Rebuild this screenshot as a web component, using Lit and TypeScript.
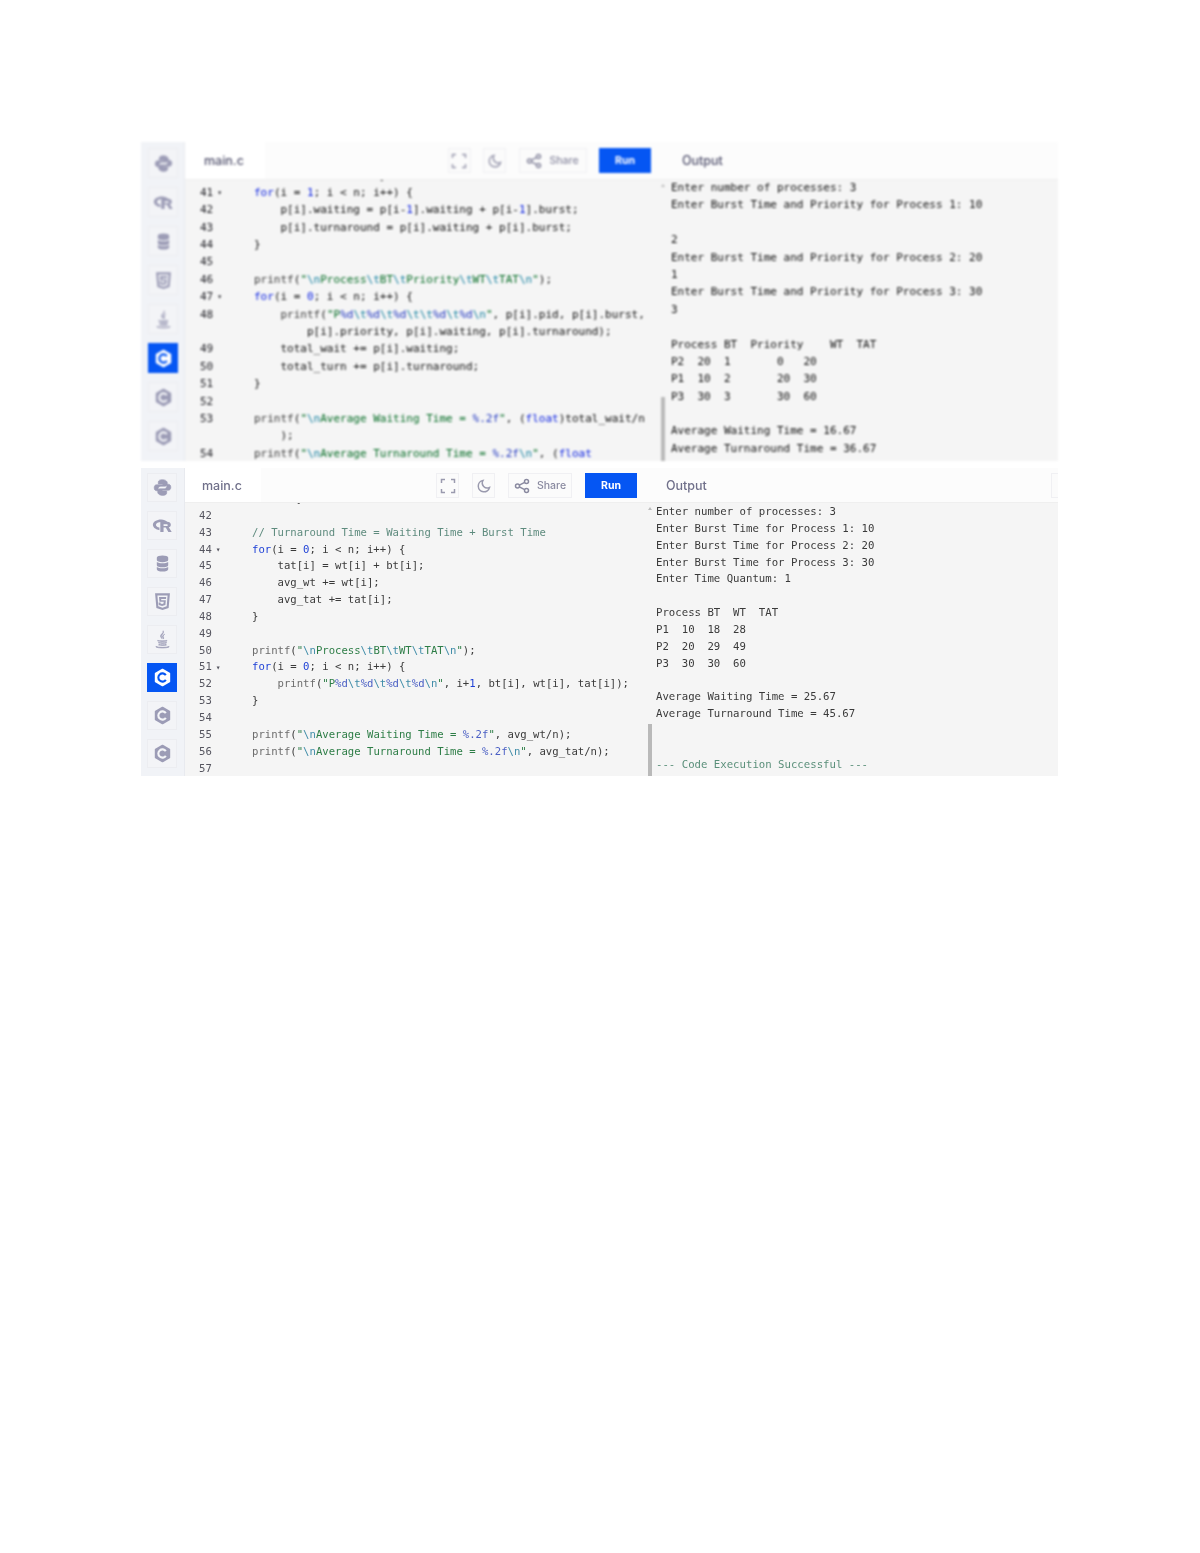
import { LitElement, html, css, svg } from "lit";
import { customElement } from "lit/decorators.js";

type Row = { n?: string; fold?: boolean; t: string };

const codeA: Row[] = [
  { t: "                   y" },
  { n: "41", fold: true, t: "for(i = 1; i < n; i++) {" },
  { n: "42", t: "    p[i].waiting = p[i-1].waiting + p[i-1].burst;" },
  { n: "43", t: "    p[i].turnaround = p[i].waiting + p[i].burst;" },
  { n: "44", t: "}" },
  { n: "45", t: "" },
  { n: "46", t: 'printf("\\nProcess\\tBT\\tPriority\\tWT\\tTAT\\n");' },
  { n: "47", fold: true, t: "for(i = 0; i < n; i++) {" },
  { n: "48", t: '    printf("P%d\\t%d\\t%d\\t\\t%d\\t%d\\n", p[i].pid, p[i].burst,' },
  { t: "        p[i].priority, p[i].waiting, p[i].turnaround);" },
  { n: "49", t: "    total_wait += p[i].waiting;" },
  { n: "50", t: "    total_turn += p[i].turnaround;" },
  { n: "51", t: "}" },
  { n: "52", t: "" },
  { n: "53", t: 'printf("\\nAverage Waiting Time = %.2f", (float)total_wait/n' },
  { t: "    );" },
  { n: "54", t: 'printf("\\nAverage Turnaround Time = %.2f\\n", (float' },
];

const codeB: Row[] = [
  { t: ",      y     ," },
  { n: "42", t: "" },
  { n: "43", t: "// Turnaround Time = Waiting Time + Burst Time" },
  { n: "44", fold: true, t: "for(i = 0; i < n; i++) {" },
  { n: "45", t: "    tat[i] = wt[i] + bt[i];" },
  { n: "46", t: "    avg_wt += wt[i];" },
  { n: "47", t: "    avg_tat += tat[i];" },
  { n: "48", t: "}" },
  { n: "49", t: "" },
  { n: "50", t: 'printf("\\nProcess\\tBT\\tWT\\tTAT\\n");' },
  { n: "51", fold: true, t: "for(i = 0; i < n; i++) {" },
  { n: "52", t: '    printf("P%d\\t%d\\t%d\\t%d\\n", i+1, bt[i], wt[i], tat[i]);' },
  { n: "53", t: "}" },
  { n: "54", t: "" },
  { n: "55", t: 'printf("\\nAverage Waiting Time = %.2f", avg_wt/n);' },
  { n: "56", t: 'printf("\\nAverage Turnaround Time = %.2f\\n", avg_tat/n);' },
  { n: "57", t: "" },
];

const outA = [
  "Enter number of processes: 3",
  "Enter Burst Time and Priority for Process 1: 10",
  "",
  "2",
  "Enter Burst Time and Priority for Process 2: 20",
  "1",
  "Enter Burst Time and Priority for Process 3: 30",
  "3",
  "",
  "Process BT  Priority    WT  TAT",
  "P2  20  1       0   20",
  "P1  10  2       20  30",
  "P3  30  3       30  60",
  "",
  "Average Waiting Time = 16.67",
  "Average Turnaround Time = 36.67",
];

const outB = [
  "Enter number of processes: 3",
  "Enter Burst Time for Process 1: 10",
  "Enter Burst Time for Process 2: 20",
  "Enter Burst Time for Process 3: 30",
  "Enter Time Quantum: 1",
  "",
  "Process BT  WT  TAT",
  "P1  10  18  28",
  "P2  20  29  49",
  "P3  30  30  60",
  "",
  "Average Waiting Time = 25.67",
  "Average Turnaround Time = 45.67",
  "",
  "",
  "--- Code Execution Successful ---",
];

const hex = svg`<path class="solid" d="M12 3l7.800 4.500v9L12 21l-7.800-4.500v-9z"/>`;
const cRing = svg`<path class="hole" d="M15.800 9.300a4.700 4.700 0 1 0 0 5.400"/>`;

const icons = [
  svg`<path class="soft" d="M11.800 3c-3 0-4.600 1-4.600 2.800V8h4.900v.8H5.400C3.600 8.800 2.500 10.200 2.500 12.300s1.100 3.500 2.900 3.500h1.700v-2.300c0-1.700 1.400-3 3.100-3h4.800c1.300 0 2.400-1.100 2.400-2.400V5.800C16.400 4 14.700 3 11.800 3z"/><path class="soft" d="M12.200 21c3 0 4.600-1 4.600-2.800V16h-4.900v-.8h6.700c1.800 0 2.900-1.400 2.900-3.500s-1.100-3.500-2.900-3.500h-1.700v2.300c0 1.700-1.400 3-3.100 3H9c-1.300 0-2.400 1.100-2.400 2.400v2.300C7.600 20 9.300 21 12.200 21z"/>`,
  svg`<path fill-rule="evenodd" d="M10.500 5C5.200 5 1 7.700 1 11.200c0 3 3.200 5.500 7.500 6.100v-2.900C6 14 4.500 12.800 4.500 11.200 4.500 9.300 7.200 7.900 10.500 7.900h7C16 6 13.500 5 10.500 5z"/><path fill-rule="evenodd" d="M9.500 7.800h7.800c2.700 0 4.200 1.400 4.200 3.300 0 1.500-.9 2.500-2.300 2.900l3.300 5.500h-3.800l-3-5.100h-2.500v5.100H9.500zm3.700 2.800v2.100h3.400c.9 0 1.400-.4 1.400-1s-.5-1.100-1.400-1.100z"/>`,
  svg`<path d="M5.500 5.500C5.500 3.800 8.400 2.800 12 2.800s6.500 1 6.500 2.700v2.600c0 1.500-2.900 2.500-6.500 2.500s-6.500-1-6.500-2.500z"/><path d="M5.500 10.200c1.500.9 3.900 1.500 6.500 1.500s5-.6 6.500-1.500v3.700c0 1.500-2.900 2.500-6.500 2.500s-6.500-1-6.500-2.500z"/><path d="M5.500 16c1.500.9 3.900 1.500 6.500 1.500s5-.6 6.500-1.500v2.500c0 1.700-2.900 2.700-6.500 2.700s-6.500-1-6.500-2.700z"/>`,
  svg`<path fill-rule="evenodd" d="M3.500 2.500h17L19 19.300 12 21.700l-7-2.400zM6.200 5l1 12.300 4.800 1.700 4.800-1.700L17.800 5z"/><path d="M8 6.800h8.200l-.2 2.400h-5.500l.1 1.500h5.200l-.5 5.200-3.800 1.200-3.800-1.200-.2-2.800h2.200l.1 1.200 1.700.6 1.700-.6.200-2.100H8.500z"/>`,
  svg`<path class="soft" d="M12.800 2c1 2.500-3.300 4-3 6.300.1 1 1 1.900 1.600 2.800-.1-1.200-1-1.900-.8-3 .3-1.600 3.300-2.800 2.200-6.100z"/><path class="soft" d="M14.500 6c-2 1-3 1.900-2.400 3.500.3.800.8 1.300.7 2 .9-.8.5-1.700.1-2.500-.4-1 .3-1.900 1.600-3z"/><path class="soft" d="M6.500 13c1.500.6 9 .6 10.500 0v.8c-1.500.6-9 .6-10.500 0zM7.500 15.300c1.500.5 7.500.5 9 0v.8c-1.500.5-7.500.5-9 0zM8 17.600c1.500.4 6.500.4 8 0l.6.8c-1.500.6-7.700.6-9.200 0zM4.500 20c3 1.300 12 1.300 15 0v.6c-3 1.500-12 1.500-15 0z"/>`,
  svg`${hex}${cRing}`,
  svg`${hex}${cRing}<circle cx="12" cy="12" r="2"/>`,
  svg`${hex}${cRing}`,
];

function stringParts(s: string) {
  const parts = s.split(/(\\[nt]|%[.\d]*[df])/);
  return parts.map((p, i) => (i % 2 ? html`<span class=${p[0] === "%" ? "fmt" : "esc"}>${p}</span>` : p));
}

function highlight(line: string) {
  const re = /(\/\/.*$)|("[^"]*"?)|\b(for|float)\b|\b(\d+)\b|\b(printf)\b/g;
  const out: unknown[] = [];
  let last = 0;
  let m: RegExpExecArray | null;
  while ((m = re.exec(line))) {
    out.push(line.slice(last, m.index));
    if (m[1]) out.push(html`<span class="com">${m[1]}</span>`);
    else if (m[2]) out.push(html`<span class="str">${stringParts(m[2])}</span>`);
    else if (m[3]) out.push(html`<span class="kw">${m[3]}</span>`);
    else if (m[4]) out.push(html`<span class="num-lit">${m[4]}</span>`);
    else out.push(html`<span class="fn">${m[5]}</span>`);
    last = m.index + m[0].length;
  }
  out.push(line.slice(last));
  return out;
}

@customElement("app-root")
export class AppRoot extends LitElement {
  static styles = css`
    :host {
      display: block;
      background: #fff;
      min-height: 1553px;
    }
    .page {
      display: flex;
      flex-direction: column;
      gap: 7px;
      padding: 142px 0 0 141px;
      width: 917px;
    }
    .panel {
      display: flex;
      overflow: hidden;
      background: #f5f5f5;
      font-family: "DejaVu Sans Mono", monospace;
      color: var(--ink);
    }
    .a {
      --ink: #0c0c0c;
      --gut-ink: #1c1c22;
      --fn-ink: #3a3a3a;
      --kw-ink: #0018e0;
      --str-ink: #006a22;
      --esc-ink: #117f9f;
      --fmt-ink: #2238c0;
      --tab-ink: #50506c;
      height: 319px;
      --fs: 11px;
      --out-fs: 11px;
      --lh: 17.4px;
      --hh: 38px;
      --editor-w: 480px;
      --tab-w: 80px;
      --gutter: 69px;
      --num-pad: 15px;
      --scroll-top: -13.5px;
      --out-pad: 6px;
      --out-top: -1px;
      --side-top: 6px;
      --item-h: 30px;
      --side-gap: 9px;
      --side-pad: 7px;
      --btn-h: 25px;
      --head-top: 6px;
      --head-right: 14px;
      --thumb-left: -4px;
      --thumb-h: 64px;
      --tab-pad: 19px;
      --title-pad: 17px;
      --btn-gap: 12.5px;
      --share-w: 68px;
      filter: blur(0.8px);
    }
    .b {
      --ink: #3a3a3a;
      --gut-ink: #55555f;
      --fn-ink: #6c6c6c;
      --kw-ink: #1c3fd6;
      --str-ink: #2d7d46;
      --esc-ink: #3f8ca8;
      --fmt-ink: #4a5fc4;
      --tab-ink: #70708a;
      height: 308px;
      --fs: 10.62px;
      --out-fs: 10.68px;
      --lh: 16.85px;
      --hh: 35px;
      --editor-w: 468px;
      --tab-w: 76px;
      --gutter: 67px;
      --num-pad: 14px;
      --scroll-top: -12px;
      --out-pad: 3px;
      --out-top: 1px;
      --side-top: 4.5px;
      --item-h: 29px;
      --side-gap: 9px;
      --side-pad: 6px;
      --btn-h: 25px;
      --head-top: 5px;
      --head-right: 16px;
      --thumb-left: -5px;
      --thumb-h: 52px;
      --tab-pad: 17px;
      --title-pad: 13px;
      --btn-gap: 13px;
      --share-w: 64px;
      filter: blur(0.55px);
    }
    .side {
      flex: 0 0 44px;
      box-sizing: border-box;
      display: flex;
      flex-direction: column;
      gap: var(--side-gap);
      padding: var(--side-top) 0 0 var(--side-pad);
      background: #f1f3f7;
      border-right: 1px solid #e8eaef;
    }
    .item {
      --hole: #f3f4f7;
      width: 30px;
      height: var(--item-h);
      flex: none;
      display: flex;
      align-items: center;
      justify-content: center;
      border: 1px solid #ecedf1;
      box-sizing: border-box;
      background: #f3f4f7;
      color: #9c9cb6;
    }
    .item svg {
      width: 21px;
      height: 21px;
      fill: currentColor;
    }
    .soft {
      stroke: currentColor;
      stroke-width: 0.7;
      stroke-linejoin: round;
    }
    .solid {
      stroke: currentColor;
      stroke-width: 2;
      stroke-linejoin: round;
    }
    .hole {
      fill: none;
      stroke: var(--hole);
      stroke-width: 2.4;
    }
    .item.on {
      --hole: #0556f3;
      background: #0556f3;
      border-color: #0556f3;
      color: #fff;
    }
    .col {
      display: flex;
      flex-direction: column;
      min-width: 0;
      position: relative;
    }
    .editor {
      flex: 0 0 var(--editor-w);
      width: var(--editor-w);
    }
    .output {
      flex: 1;
    }
    .head {
      flex: 0 0 var(--hh);
      height: var(--hh);
      box-sizing: border-box;
      display: flex;
      align-items: flex-start;
      background: #fcfcfc;
      border-bottom: 1px solid #efefef;
      font-family: Inter, "Open Sans", sans-serif;
    }
    .tab {
      width: var(--tab-w);
      height: 100%;
      background: #fff;
      display: flex;
      align-items: center;
      box-sizing: border-box;
      padding-left: var(--tab-pad);
      font-size: 12.5px;
      font-weight: 500;
      color: var(--tab-ink);
      flex: none;
    }
    .tools {
      flex: 1;
      display: flex;
      justify-content: flex-end;
      gap: var(--btn-gap);
      padding: var(--head-top) var(--head-right) 0 0;
    }
    .btn {
      height: var(--btn-h);
      width: 23px;
      box-sizing: border-box;
      display: flex;
      align-items: center;
      justify-content: center;
      gap: 7px;
      border: 1px solid #f0f0f3;
      background: #fbfbfb;
      color: #9a9aae;
      font-size: 10.5px;
      font-weight: 500;
    }
    .btn svg {
      width: 16px;
      height: 16px;
      fill: none;
      stroke: currentColor;
      stroke-width: 1.5;
    }
    .share {
      width: var(--share-w);
      color: #8a8aa0;
    }
    .run {
      width: 52px;
      background: #0556f3;
      border-color: #0556f3;
      color: #fff;
      font-weight: 700;
    }
    .title {
      height: 100%;
      display: flex;
      align-items: center;
      padding-left: var(--title-pad);
      font-size: 12.5px;
      font-weight: 500;
      color: var(--tab-ink);
      flex: 1;
    }
    .stub {
      width: 7px;
      height: var(--btn-h);
      margin-top: var(--head-top);
      box-sizing: border-box;
      border: 1px solid #f0f0f3;
      border-right: 0;
      background: #fbfbfb;
    }
    .scroll {
      flex: 1;
      min-height: 0;
      overflow: hidden;
    }
    .lines {
      margin-top: var(--scroll-top);
    }
    .row {
      display: flex;
      height: var(--lh);
      line-height: var(--lh);
      font-size: var(--fs);
      white-space: pre;
    }
    .gut {
      flex: 0 0 var(--gutter);
      box-sizing: border-box;
      padding-left: var(--num-pad);
      color: var(--gut-ink);
      display: flex;
      gap: 4px;
      align-items: center;
    }
    .fold {
      font-size: 8px;
      color: var(--gut-ink);
      line-height: 1;
    }
    .kw {
      color: var(--kw-ink);
    }
    .fn {
      color: var(--fn-ink);
    }
    .num-lit {
      color: var(--kw-ink);
    }
    .str {
      color: var(--str-ink);
    }
    .esc {
      color: var(--esc-ink);
    }
    .fmt {
      color: var(--fmt-ink);
    }
    .com {
      color: #5e8b7e;
    }
    .out {
      padding-left: var(--out-pad);
      margin-top: var(--out-top);
    }
    .out .row {
      font-size: var(--out-fs);
    }
    .ok {
      color: #5a8f7a;
    }
    .thumb {
      position: absolute;
      left: var(--thumb-left);
      bottom: 0;
      width: 3.5px;
      height: var(--thumb-h);
      background: #b9b9b9;
      z-index: 2;
    }
    .up {
      position: absolute;
      left: var(--thumb-left);
      top: calc(var(--hh) + 4px);
      width: 0;
      height: 0;
      border: 2px solid transparent;
      border-top: 0;
      border-bottom: 3px solid #bdbdbd;
      z-index: 2;
    }
  `;

  private panel(cls: string, code: Row[], out: string[], stub: boolean) {
    return html`
      <section class="panel ${cls}">
        <nav class="side">
          ${icons.map(
            (d, i) => html`<div class="item ${i === 5 ? "on" : ""}"><svg viewBox="0 0 24 24">${d}</svg></div>`
          )}
        </nav>
        <div class="col editor">
          <header class="head">
            <div class="tab">main.c</div>
            <div class="tools">
              <div class="btn">
                <svg viewBox="0 0 16 16"><path d="M1.5 5V1.5H5M11 1.5h3.500V5M14.500 11v3.500H11M5 14.500H1.500V11" /></svg>
              </div>
              <div class="btn">
                <svg viewBox="0 0 16 16"><path d="M7 2.500a5.700 5.700 0 1 0 6.500 7A5 5 0 0 1 7 2.500z" /></svg>
              </div>
              <div class="btn share">
                <svg viewBox="0 0 16 16">
                  <circle cx="3.500" cy="8" r="2" /><circle cx="12.500" cy="3.500" r="2" /><circle cx="12.500" cy="12.500" r="2" />
                  <path d="M5.300 7.100l5.400-2.700M5.300 8.900l5.400 2.700" />
                </svg>
                Share
              </div>
              <div class="btn run">Run</div>
            </div>
          </header>
          <div class="scroll">
            <div class="lines">
              ${code.map(
                (r) => html`<div class="row">
                  <span class="gut">${r.n ?? ""}${r.fold ? html`<span class="fold">▾</span>` : ""}</span>
                  <span>${highlight(r.t)}</span>
                </div>`
              )}
            </div>
          </div>
        </div>
        <div class="col output">
          <header class="head">
            <div class="title">Output</div>
            ${stub ? html`<div class="stub"></div>` : ""}
          </header>
          <div class="up"></div>
          <div class="thumb"></div>
          <div class="scroll">
            <div class="out">
              ${out.map(
                (l) => html`<div class="row ${l.startsWith("---") ? "ok" : ""}">${l || " "}</div>`
              )}
            </div>
          </div>
        </div>
      </section>
    `;
  }

  render() {
    return html`<main class="page">
      ${this.panel("a", codeA, outA, false)} ${this.panel("b", codeB, outB, true)}
    </main>`;
  }
}
